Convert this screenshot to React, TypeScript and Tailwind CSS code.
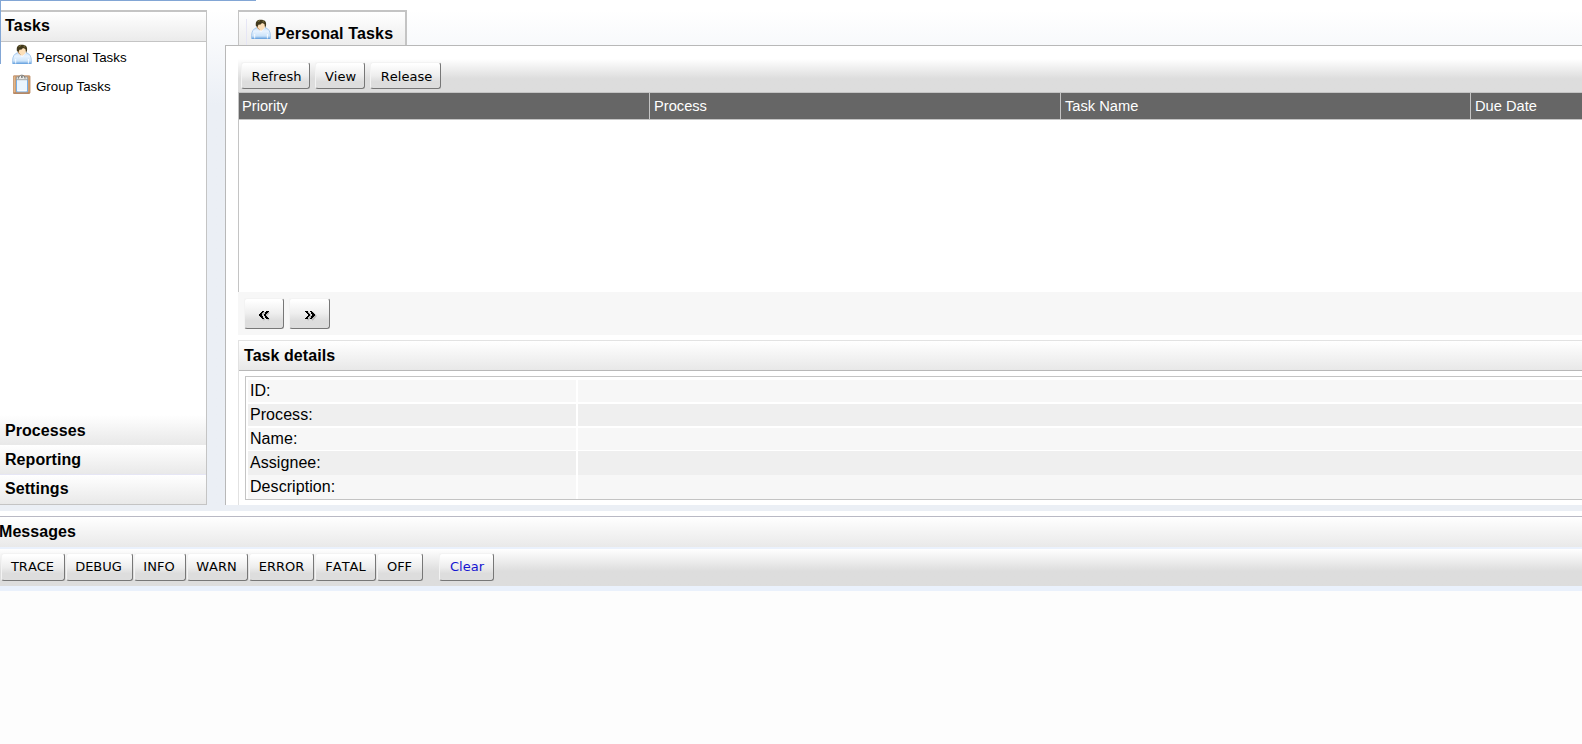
const columns = ["Priority", "Process", "Task Name", "Due Date"];

const details = [
  { label: "ID:", row: "mt-[3px] h-[21px]", text: "leading-[22px]", color: "bg-[#f7f7f7]" },
  { label: "Process:", row: "mt-[3px] h-[21px]", text: "leading-[22px]", color: "bg-[#efefef]" },
  { label: "Name:", row: "mt-[3px] h-[21px]", text: "leading-[22px]", color: "bg-[#f7f7f7]" },
  { label: "Assignee:", row: "mt-[2px] h-[22px]", text: "leading-6", color: "bg-[#efefef]" },
  { label: "Description:", row: "mt-[2px] h-[22px]", text: "leading-6", color: "bg-[#f7f7f7]" },
];

const levels = [
  { label: "TRACE", width: "w-[64px] pr-px" },
  { label: "DEBUG", width: "w-[67px] pr-[2px]" },
  { label: "INFO", width: "w-[52px] pr-[2px]" },
  { label: "WARN", width: "w-[61px] pr-[2px]" },
  { label: "ERROR", width: "w-[65px]" },
  { label: "FATAL", width: "w-[61px]" },
  { label: "OFF", width: "w-[46px] pr-px" },
];

function PersonIcon() {
  return (
    <svg width="20" height="20" viewBox="0 0 20 20" className="shrink-0">
      <defs>
        <linearGradient id="shirt" x1="0" y1="0" x2="0" y2="1">
          <stop offset="0" stopColor="#c6dff6" />
          <stop offset=".35" stopColor="#e8f3ff" />
          <stop offset=".75" stopColor="#cce4fa" />
          <stop offset="1" stopColor="#5d9bdc" />
        </linearGradient>
      </defs>
      <path d="M.5 20C0 15 .7 11 3.500 9.500L6.500 8h7l3 1.500c2.800 1.500 3.500 5.500 3 10.500z" fill="url(#shirt)" />
      <path d="M.7 19.500C.3 15.500.9 11.500 3.500 9.800L6 8.500m8 0 2.500 1.300c2.600 1.700 3.200 5.700 2.800 9.700" fill="none" stroke="#9cc2ea" strokeWidth=".8" />
      <path d="M3.700 15v4.500M16.400 15v4.500" stroke="#fff" strokeWidth=".9" />
      <path d="M6 8.800 10 13l4-4.200" fill="#fff" />
      <path d="M7.500 8.500 10 11.800l3-3.300" fill="#e7a35f" />
      <path d="M6 5c0 3.500 1.600 6 4.100 6s4.200-2.500 4.200-6l-2-2H8z" fill="#fcdfb8" />
      <path d="M6 6.500c.2 2 1.100 3.500 2.600 4.300" fill="none" stroke="#b47133" strokeWidth=".8" />
      <path d="M4.900 7C4.200 2.500 6 .8 9.800.8c4.100 0 5.900 2 5.200 6l-.9 2-.7-3.800-2.400-1-1.400 1.500-2.200.2-.8 2.300z" fill="#42391c" />
      <path d="M6.800 2.600 9 1.500m2.500.8 1.700.9" stroke="#80763e" />
    </svg>
  );
}

function ClipboardIcon() {
  return (
    <svg width="18" height="20" viewBox="0 0 18 20" className="shrink-0">
      <rect x=".3" y="1.800" width="16.700" height="17.400" rx=".6" fill="#d19f70" stroke="#b98861" strokeWidth=".8" />
      <path d="M1.300 2.500v16" stroke="#e6bd95" />
      <path d="M.3 19.200h16.400" stroke="#9d673d" strokeWidth=".8" />
      <path d="M3.500 4.500h11v13.300h-11z" fill="#eaf5ff" stroke="#78aee4" />
      <path d="M4.500 16.800h9" stroke="#fff" />
      <path d="M3.500 2.800h11l.3 2.900H3.200z" fill="#dededc" stroke="#8d8e8b" strokeWidth=".7" />
      <path d="M5.500 4.500C5.500.1 12 .1 12 4.500" fill="#eeeeec" stroke="#747572" />
      <circle cx="8.900" cy="2.900" r=".9" fill="#5f605e" />
    </svg>
  );
}

function Chevrons({ flip = false }: { flip?: boolean }) {
  const d = "M5.500 1 2 5l3.500 4M10 1 6.500 5l3.500 4";
  return (
    <svg width="13" height="12" viewBox="0 0 13 12" className={flip ? "mt-[4px] ml-[4px]" : "mt-[4px]"}>
      <g transform={flip ? "matrix(-1 0 0 1 11 0)" : undefined} fill="none">
        <path d={d} stroke="#bbb" strokeWidth="2" transform={flip ? "translate(-1.500 1)" : "translate(1 1)"} />
        <path d={d} stroke="#000" strokeWidth="1.800" shapeRendering="crispEdges" />
      </g>
    </svg>
  );
}

function Button({ children, className }: { children: React.ReactNode; className: string }) {
  return (
    <button
      className={`flex shrink-0 items-center justify-center rounded-[3px] border border-t-[#f3f3f3] border-r-[#777] border-b-[#777] border-l-[#f3f3f3] bg-linear-to-b from-white from-5% via-[#eeeeee] via-50% to-[#dddddd] to-75% font-['DejaVu_Sans',sans-serif] text-[13px] [font-kerning:none] ${className}`}
    >
      {children}
    </button>
  );
}

function SectionTitle({ children, leading }: { children: React.ReactNode; leading: string }) {
  return <div className={`h-[29px] bg-linear-to-b from-white to-[#e9e9e9] pl-[5px] text-base font-bold tracking-[.06px] ${leading}`}>{children}</div>;
}

function Sidebar() {
  return (
    <div className="mt-[10px] flex h-[495px] w-[207px] shrink-0 flex-col border-t-2 border-r border-b border-[#c4c4c4] bg-white">
      <div className="h-[30px] border-b border-[#c4c4c4] bg-linear-to-b from-white to-[#ebebeb] pl-[5px] text-base leading-[27px] font-bold tracking-[.2px]">Tasks</div>
      <div className="flex h-[29px] pt-[2px] pl-3">
        <PersonIcon />
        <span className="ml-[4px] pt-[4px] text-[13.333px] leading-5 tracking-[.04px]">Personal Tasks</span>
      </div>
      <div className="flex h-[29px] pt-[3px] pl-[13px]">
        <ClipboardIcon />
        <span className="ml-[5px] pt-[3px] text-[13.333px] leading-5">Group Tasks</span>
      </div>
      <div className="mt-auto">
        <SectionTitle leading="leading-[31px]">Processes</SectionTitle>
        <div className="h-px bg-[#e9e9e9]" />
        <SectionTitle leading="leading-[29px]">Reporting</SectionTitle>
        <div className="h-px bg-[#e6e6f5]" />
        <SectionTitle leading="leading-[27px]">Settings</SectionTitle>
      </div>
    </div>
  );
}

function TaskPanel() {
  return (
    <div className="ml-[18px] flex min-w-0 flex-1 flex-col pt-[10px]">
      <div className="ml-[13px] flex h-[35px] w-[169px] border-t-2 border-r-2 border-l border-[#c4c4c4] bg-linear-to-b from-white to-[#ededed]">
        <div className="mt-[7px] ml-[7px] flex border-l border-[#e6e6f5] pl-[4px]">
          <PersonIcon />
          <span className="ml-[4px] pt-[5px] text-base leading-5 font-bold tracking-[.14px] whitespace-nowrap">Personal Tasks</span>
        </div>
      </div>
      <div className="h-[460px] border-t border-l border-[#b8b8b8] bg-white pt-[13px] pl-[12px]">
        <div className="flex h-[33px] items-start gap-[5px] bg-linear-to-b from-white via-[#dddddd] via-60% to-[#dddddd] pt-[3px] pl-[3px]">
          <Button className="h-[27px] w-[69px] pt-[2px] pl-[2px]">Refresh</Button>
          <Button className="h-[27px] w-[50px] pt-[2px] pl-px">View</Button>
          <Button className="h-[27px] w-[71px] pt-[2px] pl-[2px]">Release</Button>
        </div>
        <div className="h-[200px] border-t border-l border-[#c4c4c4]">
          <div className="grid h-[27px] grid-cols-[411px_411px_410px_1fr] border-b border-[#c4c4c4] bg-[#666] text-[14.667px] leading-[26px] text-white">
            {columns.map((name) => (
              <div key={name} className="border-r border-[#c4c4c4] pl-[4px] first:pl-[3px] last:border-r-0">
                {name}
              </div>
            ))}
          </div>
        </div>
        <div className="flex h-[43px] gap-[5px] bg-[#f7f7f7] pt-[6px] pl-[6px]">
          <Button className="h-[31px] w-[40px]">
            <Chevrons />
          </Button>
          <Button className="h-[31px] w-[41px]">
            <Chevrons flip />
          </Button>
        </div>
        <div className="mt-[5px] h-[165px] border-t border-l border-[#e2e2e2]">
          <div className="h-[30px] border-b border-[#b8b8b8] bg-linear-to-b from-white to-[#e8e8e8] pl-[5px] text-base leading-[30px] font-bold tracking-[.06px]">Task details</div>
          <div className="mt-[5px] ml-[6px] h-[124px] border-y border-l border-[#c4c4c4] pl-[2px]">
            {details.map(({ label, row, text, color }) => (
              <div key={label} className={`grid grid-cols-[328px_1fr] gap-[2px] ${row}`}>
                <div className={`pl-[2px] text-base tracking-[.06px] ${text} ${color}`}>{label}</div>
                <div className={color} />
              </div>
            ))}
          </div>
        </div>
      </div>
    </div>
  );
}

function Messages() {
  return (
    <div className="bg-white pt-[5px]">
      <div className="h-[31px] border-t border-[#b9b9c4] bg-linear-to-b from-white to-[#e9e9e9] text-base leading-[30px] font-bold tracking-[.06px]">
        <span className="-ml-px">Messages</span>
      </div>
      <div className="h-[2px] bg-[#eaf1fc]" />
      <div className="flex h-[37px] gap-px bg-linear-to-b from-white via-[#dddddd] via-60% to-[#dddddd] pt-[4px] pl-px">
        {levels.map(({ label, width }) => (
          <Button key={label} className={`h-[28px] ${width}`}>
            {label}
          </Button>
        ))}
        <Button className="ml-[15px] h-[28px] w-[55px] pl-px text-[#1515d0]">Clear</Button>
      </div>
      <div className="h-[5px] bg-[#eaf1fc]" />
    </div>
  );
}

export default function App() {
  return (
    <div className="relative h-[744px] w-[1582px] overflow-hidden bg-[#fdfdfd] font-['Liberation_Sans',Arial,sans-serif] text-black">
      <div className="bg-linear-to-b from-white from-[10px] to-[#ebeff5] to-[105px] pb-[6px]">
        <div className="flex h-[505px]">
          <Sidebar />
          <TaskPanel />
        </div>
      </div>
      <Messages />
      <div className="absolute top-0 left-0 h-[64px] w-[256px] border-t border-l border-[#82a6d5]" />
    </div>
  );
}
